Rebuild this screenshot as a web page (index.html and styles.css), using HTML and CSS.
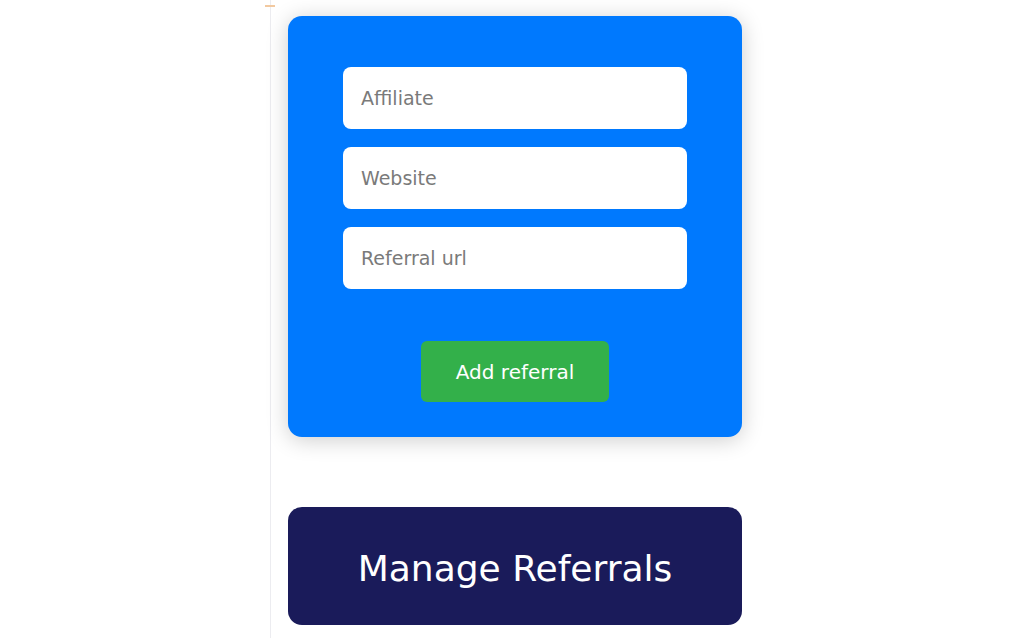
FILE: index.html
```html
<!DOCTYPE html>
<html lang="en">
<head>
    <meta charset="UTF-8">
    <meta name="viewport" content="width=device-width, initial-scale=1.0">
    <title>Referrals</title>
    <link rel="stylesheet" href="styles.css">
</head>
<body>

    <div class="popup">
        <span class="corner-mark"></span>

        <!-- Add referral form -->
        <form class="referral-card">
            <div class="fields">
                <input type="text" class="field" placeholder="Affiliate">
                <input type="text" class="field" placeholder="Website">
                <input type="text" class="field" placeholder="Referral url">
            </div>
            <button type="button" class="add-btn">Add referral</button>
        </form>

        <!-- Manage link -->
        <a href="#" class="manage-btn">Manage Referrals</a>
    </div>

</body>
</html>
```

FILE: styles.css
```css
body {
    margin: 0;
    background-color: #ffffff;
    font-family: "DejaVu Sans", Verdana, sans-serif;
}

.popup {
    position: relative;
    width: 486px;
    height: 638px;
    margin-left: 270px;
    padding: 16px 0 0 17px;
    box-sizing: border-box;
    border-left: 1px solid #ececf0;
    display: flex;
    flex-direction: column;
}

/* small orange tick at the top-left corner */
.corner-mark {
    position: absolute;
    top: 5px;
    left: -6px;
    width: 10px;
    height: 2px;
    background-color: #f2c9a0;
}

/* Blue card */
.referral-card {
    width: 454px;
    margin: 0;
    padding: 51px 55px 35px;
    box-sizing: border-box;
    background-color: #0079fe;
    border-radius: 14px;
    box-shadow: 0 3px 22px rgba(0, 0, 0, 0.2);
    display: flex;
    flex-direction: column;
    align-items: center;
    gap: 52px;
}

.fields {
    width: 100%;
    display: flex;
    flex-direction: column;
    gap: 18px;
}

.field {
    height: 62px;
    padding: 0 18px;
    border: none;
    border-radius: 8px;
    background-color: #ffffff;
    font-family: "DejaVu Sans", Verdana, sans-serif;
    font-size: 19px;
    outline: none;
}

.field::placeholder {
    color: #7a7a7a;
}

.add-btn {
    width: 188px;
    height: 61px;
    border: none;
    border-radius: 6px;
    background-color: #33b04a;
    color: #ffffff;
    font-family: "DejaVu Sans", Verdana, sans-serif;
    font-size: 20px;
}

/* Navy button */
.manage-btn {
    width: 454px;
    height: 118px;
    margin-top: 70px;
    padding-top: 4px;
    box-sizing: border-box;
    border-radius: 14px;
    background-color: #1a1b5a;
    color: #ffffff;
    text-decoration: none;
    font-size: 36px;
    display: flex;
    align-items: center;
    justify-content: center;
}
```
